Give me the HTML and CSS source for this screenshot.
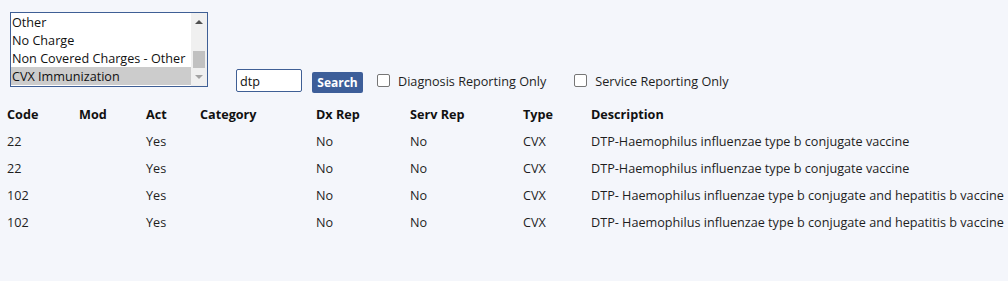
FILE: index.html
```html
<!DOCTYPE html>
<html>
<head>
<meta charset="utf-8">
<link rel="stylesheet" href="styles.css">
</head>
<body>
<div class="page">
  <div class="top">
    <div class="listbox">
      <div class="options">
        <div class="opt">Other</div>
        <div class="opt">No Charge</div>
        <div class="opt">Non Covered Charges - Other</div>
        <div class="opt sel">CVX Immunization</div>
      </div>
      <div class="sbar">
        <div class="arrow up"></div>
        <div class="track"><div class="thumb"></div></div>
        <div class="arrow down"></div>
      </div>
    </div>
    <div class="controls">
      <input class="search-input" type="text" value="dtp">
      <button class="btn">Search</button>
      <label class="chk"><span class="box"></span>Diagnosis Reporting Only</label>
      <label class="chk chk2"><span class="box"></span>Service Reporting Only</label>
    </div>
  </div>
  <table class="grid">
    <thead>
      <tr><th class="c1">Code</th><th class="c2">Mod</th><th class="c3">Act</th><th class="c4">Category</th><th class="c5">Dx Rep</th><th class="c6">Serv Rep</th><th class="c7">Type</th><th>Description</th></tr>
    </thead>
    <tbody>
      <tr><td>22</td><td></td><td>Yes</td><td></td><td>No</td><td>No</td><td>CVX</td><td>DTP-Haemophilus influenzae type b conjugate vaccine</td></tr>
      <tr><td>22</td><td></td><td>Yes</td><td></td><td>No</td><td>No</td><td>CVX</td><td>DTP-Haemophilus influenzae type b conjugate vaccine</td></tr>
      <tr><td>102</td><td></td><td>Yes</td><td></td><td>No</td><td>No</td><td>CVX</td><td>DTP- Haemophilus influenzae type b conjugate and hepatitis b vaccine</td></tr>
      <tr><td>102</td><td></td><td>Yes</td><td></td><td>No</td><td>No</td><td>CVX</td><td>DTP- Haemophilus influenzae type b conjugate and hepatitis b vaccine</td></tr>
    </tbody>
  </table>
</div>
</body>
</html>
```
FILE: styles.css
```css
html, body {
  margin: 0;
  padding: 0;
  background: #f4f6fb;
  font-family: "Open Sans", "Noto Sans", sans-serif;
  font-size: 12.65px;
  color: #1e1e1e;
}
.page {
  padding-top: 12px;
}
.top {
  display: flex;
  align-items: flex-start;
  padding-left: 10px;
}
.listbox {
  width: 196px;
  height: 73px;
  border: 1px solid #3f5f95;
  background: #fff;
  display: flex;
}
.options {
  flex: 1;
}
.opt {
  height: 18px;
  line-height: 19px;
  padding-left: 1px;
  white-space: nowrap;
  color: #111;
}
.opt.sel {
  background: #cccccc;
}
.sbar {
  width: 16px;
  background: #f0f0f0;
  display: flex;
  flex-direction: column;
  align-items: center;
}
.arrow {
  width: 0;
  height: 0;
  border-left: 4px solid transparent;
  border-right: 4px solid transparent;
}
.arrow.up {
  margin-top: 7px;
  border-bottom: 4px solid #505050;
}
.arrow.down {
  margin-bottom: 7px;
  border-top: 4px solid #a3a3a3;
}
.track {
  flex: 1;
  width: 100%;
  position: relative;
}
.thumb {
  position: absolute;
  left: 2px;
  right: 2px;
  top: 27px;
  height: 17px;
  background: #c1c1c1;
}
.controls {
  display: flex;
  align-items: center;
  margin-top: 57px;
  margin-left: 28px;
  height: 23px;
}
.search-input {
  box-sizing: border-box;
  width: 66px;
  height: 23px;
  border: 1px solid #3f5f95;
  border-radius: 2px;
  padding: 0 3px;
  font-family: "Open Sans", "Noto Sans", sans-serif;
  font-size: 12.65px;
  color: #111;
  background: #fff;
  margin: 0;
  align-self: flex-start;
}
.btn {
  box-sizing: border-box;
  margin: 3px 0 0 10px;
  height: 21px;
  width: 51px;
  padding: 0;
  border: none;
  border-radius: 2px;
  background: #3d5e99;
  color: #fff;
  font-family: "Open Sans", "Noto Sans", sans-serif;
  font-weight: 700;
  font-size: 12px;
}
.chk {
  display: flex;
  align-items: center;
  margin-left: 14px;
  white-space: nowrap;
}
.chk2 {
  margin-left: 28px;
}
.box {
  width: 11px;
  height: 11px;
  border: 1px solid #767676;
  border-radius: 2px;
  background: #fff;
  margin-right: 8px;
}
.grid {
  margin-top: 8px;
  border-collapse: collapse;
}
.grid th, .grid td {
  height: 27px;
  padding: 0 0 0 7px;
  text-align: left;
  white-space: nowrap;
}
.grid th {
  font-weight: 700;
  color: #111;
}
.c1 { width: 65px; }
.c2 { width: 60px; }
.c3 { width: 47px; }
.c4 { width: 109px; }
.c5 { width: 87px; }
.c6 { width: 106px; }
.c7 { width: 61px; }
```
